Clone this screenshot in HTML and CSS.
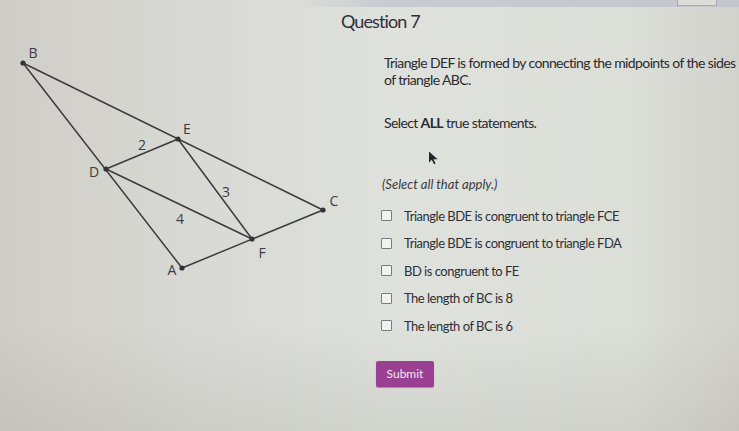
FILE: index.html
```html
<!DOCTYPE html>
<html lang="en">
<head>
<meta charset="utf-8">
<title>Question 7</title>
<link rel="stylesheet" href="styles.css">
</head>
<body>
<div class="topbar"><span class="topbox"></span></div>
<main class="page">
  <div class="figure">
    <svg class="diagram" width="340" height="290" viewBox="0 7 340 290" xmlns="http://www.w3.org/2000/svg">
      <g class="edges">
        <line x1="23" y1="63" x2="323" y2="210"/>
        <line x1="23" y1="63" x2="182" y2="268"/>
        <line x1="182" y1="268" x2="323" y2="210"/>
        <line x1="106" y1="169" x2="178" y2="139"/>
        <line x1="106" y1="169" x2="252" y2="239"/>
        <line x1="178" y1="139" x2="252" y2="239"/>
      </g>
      <g class="dots">
        <circle cx="23" cy="63" r="2.6"/>
        <circle cx="178" cy="139" r="2.6"/>
        <circle cx="106" cy="169" r="2.6"/>
        <circle cx="323" cy="210" r="2.6"/>
        <circle cx="252" cy="239" r="2.6"/>
        <circle cx="182" cy="268" r="2.6"/>
      </g>
      <g class="labels">
        <text x="33" y="52">B</text>
        <text x="187" y="128">E</text>
        <text x="142" y="144">2</text>
        <text x="94" y="171">D</text>
        <text x="226" y="191">3</text>
        <text x="334" y="200">C</text>
        <text x="180" y="218">4</text>
        <text x="262" y="252">F</text>
        <text x="172" y="269">A</text>
      </g>
    </svg>
  </div>
  <section class="question">
    <h1 class="q-title">Question 7</h1>
    <div class="q-body">
      <p class="q-text">Triangle DEF is formed by connecting the midpoints of the sides of triangle ABC.</p>
      <p class="q-text q-select">Select <b>ALL</b> true statements.</p>
      <p class="q-hint">(Select all that apply.)</p>
      <svg class="cursor" width="12" height="14" viewBox="0 0 12 14" xmlns="http://www.w3.org/2000/svg"><path d="M1 0.5 L1 11.5 L3.8 8.8 L6 13.2 L7.6 12.4 L5.5 8.2 L9.6 8.2 Z"/></svg>
    </div>
    <ul class="options">
      <li class="option"><span class="box"></span>Triangle BDE is congruent to triangle FCE</li>
      <li class="option"><span class="box"></span>Triangle BDE is congruent to triangle FDA</li>
      <li class="option"><span class="box"></span>BD is congruent to FE</li>
      <li class="option"><span class="box"></span>The length of BC is 8</li>
      <li class="option"><span class="box"></span>The length of BC is 6</li>
    </ul>
    <button class="submit" type="button">Submit</button>
  </section>
</main>
</body>
</html>
```
FILE: styles.css
```css
html, body {
  margin: 0;
  padding: 0;
}
body {
  width: 739px;
  height: 431px;
  overflow: hidden;
  font-family: Lato, "Open Sans", "Liberation Sans", sans-serif;
  color: #2b2c31;
  background:
    linear-gradient(to bottom, rgba(0,0,0,0) 75%, rgba(120,118,105,0.12) 100%),
    linear-gradient(to right, #cfcdc7 0%, #d8d9d4 25%, #dfe1dc 55%, #dcded8 85%, #d2d2cc 100%);
}
.topbar {
  height: 7px;
  display: flex;
  background: linear-gradient(to right, rgba(196,197,206,0) 40%, #c9cad2 52%, #c4c5cd 100%);
}
.topbox {
  margin-left: auto;
  margin-right: 22px;
  width: 38px;
  height: 5px;
  background: #dedcd8;
  border: 1px solid #a9a9b0;
  border-top: none;
}
.page {
  display: flex;
  align-items: flex-start;
}
.figure {
  width: 340px;
  flex: none;
}
.diagram {
  display: block;
}
.edges line {
  stroke: #3c3b3d;
  stroke-width: 1.5;
  stroke-linecap: round;
}
.dots circle {
  fill: #333236;
}
.labels text {
  font-family: "Open Sans", "Liberation Sans", sans-serif;
  font-size: 14px;
  fill: #3d3d42;
  text-anchor: middle;
  dominant-baseline: central;
}
.question {
  flex: 1;
  min-width: 0;
  padding-left: 1px;
}
.q-title {
  margin: 3px 0 0;
  font-size: 18px;
  line-height: 22px;
  font-weight: 400;
  letter-spacing: -0.9px;
  color: #2f3036;
}
.q-body {
  position: relative;
  margin-left: 43px;
}
.q-text {
  width: 360px;
  margin: 22px 0 0;
  font-size: 14px;
  line-height: 17px;
  letter-spacing: -0.62px;
  color: #2a2b30;
}
.q-text b {
  font-weight: 700;
}
.q-select {
  margin-top: 26px;
}
.q-hint {
  margin: 45px 0 0 -2px;
  font-size: 13px;
  line-height: 17px;
  font-style: italic;
  color: #3a3b42;
}
.cursor {
  position: absolute;
  left: 44px;
  top: 97px;
}
.cursor path {
  fill: #26262a;
}
.options {
  list-style: none;
  margin: 9px 0 0 40px;
  padding: 0;
}
.option {
  height: 27.5px;
  display: flex;
  align-items: center;
  font-size: 13px;
  letter-spacing: -0.5px;
  color: #2f3036;
}
.box {
  width: 9px;
  height: 9px;
  border: 1px solid #7a7b82;
  background: #f2f3f0;
  border-radius: 1px;
  margin-right: 12px;
  flex: none;
}
.submit {
  margin: 21px 0 0 35px;
  width: 58px;
  height: 26px;
  padding: 0;
  border: none;
  border-radius: 2px;
  background: #9b3f93;
  color: #f1e6ef;
  font-family: Lato, "Open Sans", "Liberation Sans", sans-serif;
  font-size: 12px;
  box-shadow: 0 1px 1px rgba(60,30,60,0.4);
}
```
